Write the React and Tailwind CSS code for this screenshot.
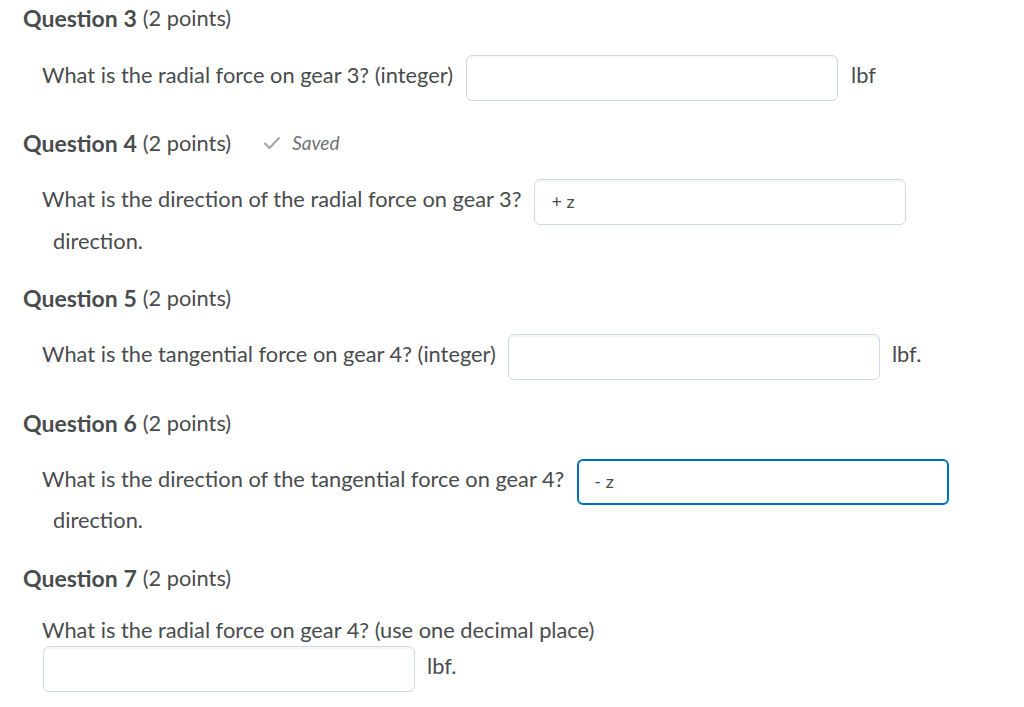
import React from "react";

const Heading = ({ num, children }) => (
  <div className="flex items-center h-[28px] text-[21.8px] text-[#494c4e]">
    <span className="font-bold text-[23px]">Question {num}</span>
    <span className="ml-[6px]">(2 points)</span>
    {children}
  </div>
);

const Box = ({ value, focused }) => (
  <div
    className={
      "w-[372px] h-[46px] rounded-[6px] bg-white flex items-center text-[18px] text-[#494c4e] " +
      (focused
        ? "border-2 border-[#006fbf] pl-[15px]"
        : "border border-[#d3d9e3] pl-[16px] shadow-[inset_0_2px_0_0_rgba(185,194,208,0.15)]")
    }
  >
    <span className="pb-[2px]">{value}</span>
  </div>
);

export default function App() {
  return (
    <div
      className="min-h-screen bg-white text-[#494c4e] pl-[23px] pt-[4px]"
      style={{ fontFamily: "Lato, 'Noto Sans', sans-serif" }}
    >
      {/* Question 3 */}
      <Heading num={3} />
      <div className="flex items-center mt-[23px] pl-[19px] text-[21.8px]">
        <span className="pb-[5px]">What is the radial force on gear 3? (integer)</span>
        <div className="ml-[13px]">
          <Box />
        </div>
        <span className="ml-[13px] pb-[5px]">lbf</span>
      </div>

      {/* Question 4 */}
      <div className="mt-[28px]">
        <Heading num={4}>
          <span className="ml-[32px] flex items-center text-[19px] italic text-[#6e7376]">
            <svg width="18" height="14" viewBox="0 0 18 14" className="mr-[11px]">
              <path d="M2 7.5 L6.5 12 L16 2" fill="none" stroke="#9ea3a8" strokeWidth="2" strokeLinecap="round" strokeLinejoin="round" />
            </svg>
            Saved
          </span>
        </Heading>
      </div>
      <div className="flex items-center mt-[22px] pl-[19px] text-[21.8px]">
        <span className="pb-[5px]">What is the direction of the radial force on gear 3?</span>
        <div className="ml-[13px]">
          <Box value="+ z" />
        </div>
      </div>
      <div className="h-[28px] flex items-center mt-[2px] pl-[30px] text-[21.8px]">
        <span>direction.</span>
      </div>

      {/* Question 5 */}
      <div className="mt-[29px]">
        <Heading num={5} />
      </div>
      <div className="flex items-center mt-[22px] pl-[19px] text-[21.8px]">
        <span className="pb-[5px]">What is the tangential force on gear 4? (integer)</span>
        <div className="ml-[12px]">
          <Box />
        </div>
        <span className="ml-[12px] pb-[5px]">lbf.</span>
      </div>

      {/* Question 6 */}
      <div className="mt-[29px]">
        <Heading num={6} />
      </div>
      <div className="flex items-center mt-[22px] pl-[19px] text-[21.8px]">
        <span className="pb-[5px]">What is the direction of the tangential force on gear 4?</span>
        <div className="ml-[13px]">
          <Box value="- z" focused />
        </div>
      </div>
      <div className="h-[28px] flex items-center mt-[1px] pl-[30px] text-[21.8px]">
        <span>direction.</span>
      </div>

      {/* Question 7 */}
      <div className="mt-[30px]">
        <Heading num={7} />
      </div>
      <div className="h-[28px] flex items-center mt-[24px] pl-[19px] text-[21.8px]">
        <span>What is the radial force on gear 4? (use one decimal place)</span>
      </div>
      <div className="flex items-center mt-[2px] pl-[20px] text-[21.8px]">
        <Box />
        <span className="ml-[12px] pb-[5px]">lbf.</span>
      </div>
    </div>
  );
}
